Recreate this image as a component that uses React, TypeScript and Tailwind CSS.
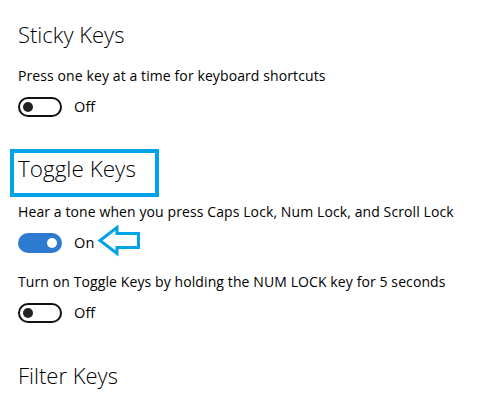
import React from "react";

function Toggle({ on }: { on: boolean }) {
  return on ? (
    <div className="w-[44px] h-[20px] rounded-full bg-[#2d7bd0] flex items-center justify-end pr-[5px] shrink-0">
      <div className="w-[10px] h-[10px] rounded-full bg-white" />
    </div>
  ) : (
    <div className="w-[44px] h-[20px] rounded-full border-2 border-[#111] flex items-center pl-[3px] shrink-0">
      <div className="w-[10px] h-[10px] rounded-full bg-[#222]" />
    </div>
  );
}

function ToggleRow({ on, children }: { on: boolean; children?: React.ReactNode }) {
  return (
    <div className="relative flex items-center h-[20px] mt-[11px]">
      <Toggle on={on} />
      <span className="ml-[12px] text-[14.5px] leading-[20px] tracking-[0.1px] text-black">{on ? "On" : "Off"}</span>
      {children}
    </div>
  );
}

export default function App() {
  return (
    <div
      className="w-[503px] h-[401px] bg-white overflow-hidden pl-[18px] pt-[19px] text-black"
      style={{ fontFamily: "'Open Sans', 'Noto Sans', sans-serif" }}
    >
      <h2 className="text-[22px] leading-[30px] font-light">Sticky Keys</h2>
      <p className="mt-[17px] text-[14px] leading-[20px] tracking-[0.1px]">Press one key at a time for keyboard shortcuts</p>
      <ToggleRow on={false} />

      <div className="-ml-[8px] mt-[32px] w-[149px] h-[48px] border-4 border-[#00a2e8] pl-[4px] pt-[1px]">
        <h2 className="text-[22.5px] leading-[30px] font-light">Toggle Keys</h2>
      </div>
      <p className="mt-[5px] text-[14px] leading-[20px] tracking-[0.1px]">
        Hear a tone when you press Caps Lock, Num Lock, and Scroll Lock
      </p>
      <ToggleRow on={true}>
        <svg
          className="absolute left-[79px] top-[-8px]"
          width="46"
          height="32"
          viewBox="0 0 46 32"
          fill="none"
        >
          <polygon
            points="3,15.5 20,2.5 20,8.5 41.5,8.5 41.5,22.5 20,22.5 20,28.5"
            stroke="#00a2e8"
            strokeWidth="3"
            strokeLinejoin="miter"
          />
        </svg>
      </ToggleRow>
      <p className="mt-[19px] text-[14px] leading-[20px] tracking-[0.1px]">
        Turn on Toggle Keys by holding the NUM LOCK key for 5 seconds
      </p>
      <ToggleRow on={false} />

      <h2 className="mt-[37px] text-[22px] leading-[30px] font-light">Filter Keys</h2>
    </div>
  );
}
